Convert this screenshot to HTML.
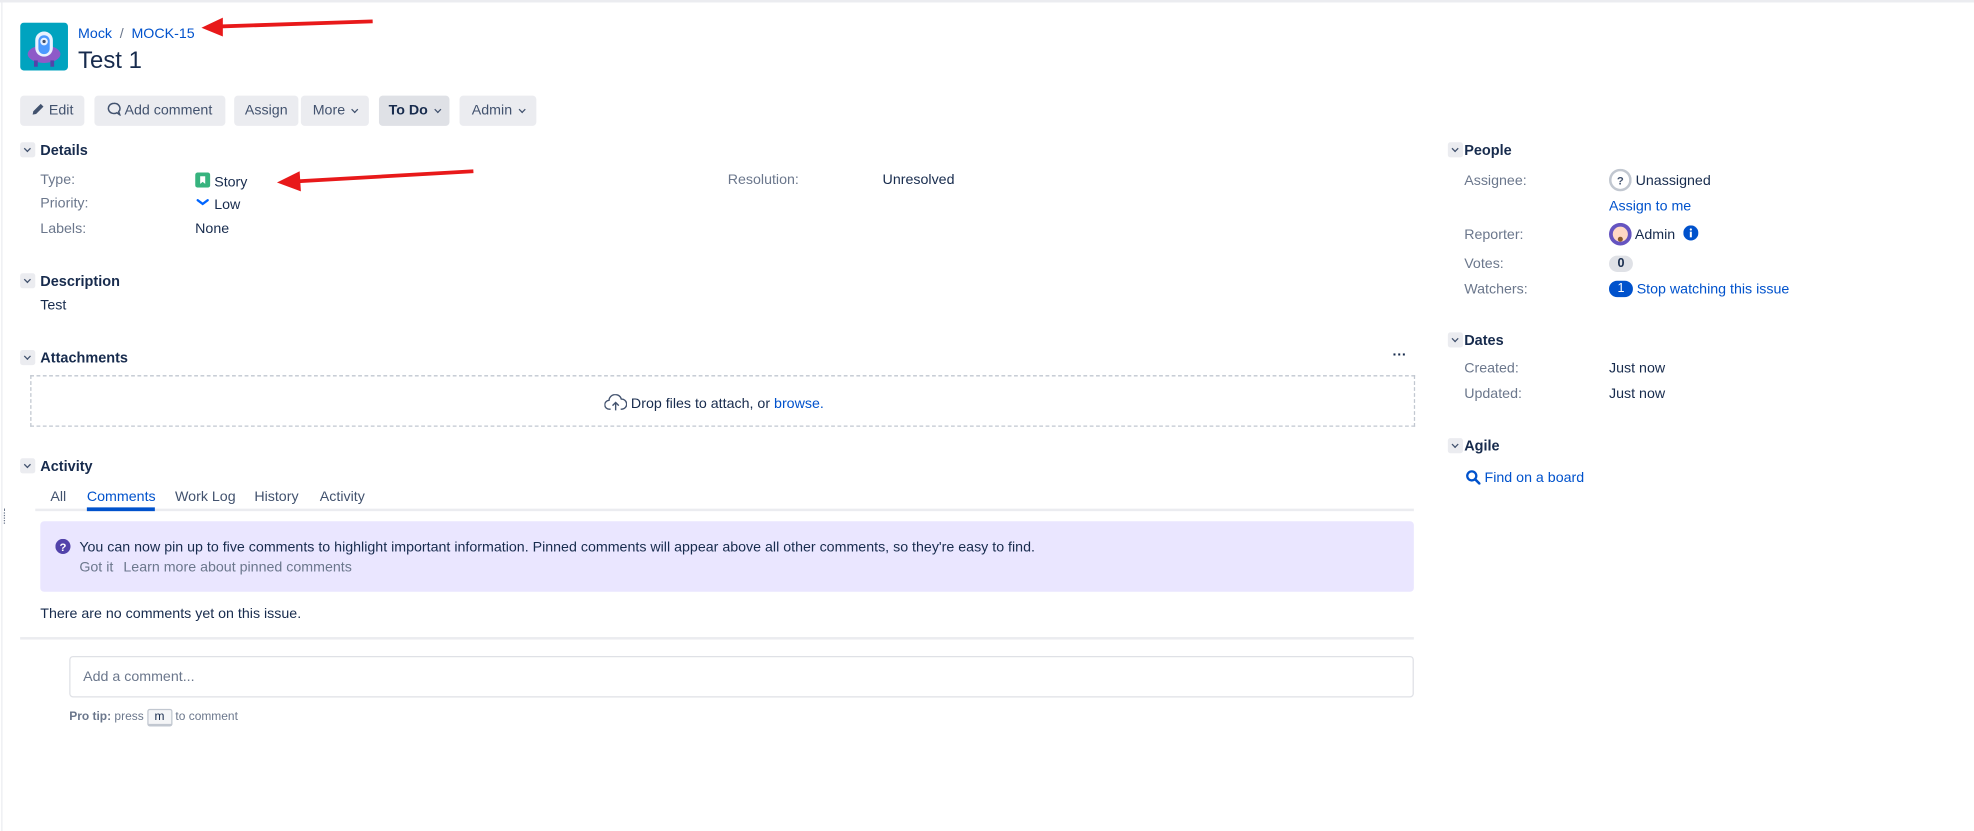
<!DOCTYPE html>
<html><head><meta charset="utf-8">
<style>
html,body{margin:0;padding:0;background:#fff;overflow:hidden;width:1974px;height:831px}
#w{position:absolute;left:0;top:0;width:1568px;height:660px;transform:scale(1.259);transform-origin:0 0;font-family:"Liberation Sans",sans-serif;font-size:11.3px;color:#172b4d}
.a{position:absolute;white-space:nowrap;margin-top:1.5px}
.lb{color:#6b778c}
.ln{color:#0052cc}
.btn{position:absolute;top:76px;height:24px;line-height:25px;background:#ebecf0;border-radius:3px;color:#42526e;font-size:11.3px;text-align:center}
.chev{position:absolute;width:12px;height:12px;background:#ebecf0;border-radius:2px}
.chev:after{content:"";position:absolute;left:4px;top:3px;width:2.5px;height:2.5px;border-right:1.6px solid #42526e;border-bottom:1.6px solid #42526e;transform:rotate(45deg)}
.h{position:absolute;font-weight:bold;font-size:11.5px;white-space:nowrap;margin-top:1.5px}
.dd{display:inline-block;width:2.5px;height:2.5px;border-right:1.6px solid #42526e;border-bottom:1.6px solid #42526e;transform:rotate(45deg);margin-left:6px;vertical-align:3px}
</style></head><body><div id="w">
<div style="position:absolute;left:0;top:0;width:1568px;height:2px;background:#ebecf0"></div>
<div style="position:absolute;left:1px;top:0;width:1px;height:660px;background:#ebecf0"></div>

<svg class="a" style="left:16px;top:18px;margin:0" width="38" height="38" viewBox="0 0 38 38"><rect width="38" height="38" rx="3" fill="#00a3bf"/><ellipse cx="19" cy="25" rx="13" ry="7" fill="#8e5ac8"/><rect x="12" y="7" width="14" height="20" rx="7" fill="#e9f2ff"/><rect x="14.5" y="10" width="9" height="15" rx="4.5" fill="#4c9aff"/><circle cx="19" cy="15" r="3" fill="#e9f2ff"/><circle cx="19" cy="15" r="1.3" fill="#42526e"/><rect x="11" y="30" width="3" height="5" fill="#5243aa"/><rect x="24" y="30" width="3" height="5" fill="#5243aa"/></svg>
<div class="a ln" style="left:62px;top:19px">Mock <span style="color:#6b778c;margin:0 3px">/</span> MOCK-15</div>
<div class="a" style="left:62px;top:36px;font-size:19px">Test 1</div>

<div class="btn" style="left:16px;width:51px"><svg width="11" height="11" viewBox="0 0 12 12" style="vertical-align:-1px"><path d="M1 11l.6-3L8 1.6l2.4 2.4L4 10.4z" fill="#42526e"/></svg> Edit</div>
<div class="btn" style="left:75px;width:104px"><svg width="11" height="11" viewBox="0 0 12 12" style="vertical-align:-1px"><path d="M6 1.2a4.8 4.4 0 1 0 2.6 8.1L11 11l-.9-2.6A4.8 4.4 0 0 0 6 1.2z" fill="none" stroke="#42526e" stroke-width="1.3"/></svg> Add comment</div>
<div class="btn" style="left:186px;width:51px">Assign</div>
<div class="btn" style="left:239px;width:54px">More<span class="dd"></span></div>
<div class="btn" style="left:301px;width:56px;background:#dfe1e6;color:#172b4d;font-weight:bold">To Do<span class="dd"></span></div>
<div class="btn" style="left:365px;width:61px">Admin<span class="dd"></span></div>

<div class="chev" style="left:16px;top:113px"></div><div class="h" style="left:32px;top:112px">Details</div>
<div class="a lb" style="left:32px;top:135px">Type:</div>
<div class="a" style="left:155px;top:135px"><svg width="12" height="12" viewBox="0 0 12 12" style="vertical-align:-1px"><rect width="12" height="12" rx="2" fill="#36b37e"/><path d="M4 3h4v6L6 7.5 4 9z" fill="#fff"/></svg> Story</div>
<div class="a lb" style="left:32px;top:154px">Priority:</div>
<div class="a" style="left:155px;top:154px"><svg width="12" height="10" viewBox="0 0 12 10"><path d="M2 3l4 3 4-3" fill="none" stroke="#0065ff" stroke-width="1.8" stroke-linecap="round"/></svg> Low</div>
<div class="a lb" style="left:32px;top:174px">Labels:</div>
<div class="a" style="left:155px;top:174px">None</div>
<div class="a lb" style="left:578px;top:135px">Resolution:</div>
<div class="a" style="left:701px;top:135px">Unresolved</div>

<div class="chev" style="left:16px;top:217px"></div><div class="h" style="left:32px;top:216px">Description</div>
<div class="a" style="left:32px;top:235px">Test</div>

<div class="chev" style="left:16px;top:278px"></div><div class="h" style="left:32px;top:277px">Attachments</div>
<div class="a" style="left:1106px;top:274px;font-weight:bold">···</div>
<div style="position:absolute;left:24px;top:298px;width:1098px;height:39px;border:1px dashed #c1c7d0"></div>
<div class="a" style="left:480px;top:311px"><svg width="18" height="14" viewBox="0 0 18 14" style="vertical-align:-3px"><path d="M5 12H4a3.5 3.5 0 0 1-.3-7A5 5 0 0 1 13.5 4 3.8 3.8 0 0 1 14 12h-1M9 13V7M6.5 9.2L9 6.7l2.5 2.5" fill="none" stroke="#42526e" stroke-width="1.1"/></svg> Drop files to attach, or <span class="ln">browse.</span></div>

<div class="chev" style="left:16px;top:364px"></div><div class="h" style="left:32px;top:363px">Activity</div>
<div class="a" style="left:40px;top:387px;color:#42526e">All</div>
<div class="a ln" style="left:69px;top:387px">Comments</div>
<div class="a" style="left:139px;top:387px;color:#42526e">Work Log</div>
<div class="a" style="left:202px;top:387px;color:#42526e">History</div>
<div class="a" style="left:254px;top:387px;color:#42526e">Activity</div>
<div style="position:absolute;left:28px;top:404px;width:1095px;height:2px;background:#ebecf0"></div>
<div style="position:absolute;left:69px;top:403px;width:54px;height:3px;background:#0052cc"></div>
<div style="position:absolute;left:3px;top:404px;width:1px;height:12px;border-left:1.5px dotted #6b778c"></div>

<div style="position:absolute;left:32px;top:414px;width:1091px;height:56px;background:#eae6ff;border-radius:3px"></div>
<svg class="a" style="left:44px;top:428px;margin:0" width="12" height="12" viewBox="0 0 12 12"><circle cx="6" cy="6" r="6" fill="#5243aa"/><text x="6" y="9.5" font-size="9" font-weight="bold" fill="#fff" text-anchor="middle" font-family="Liberation Sans">?</text></svg>
<div class="a" style="left:63px;top:427px">You can now pin up to five comments to highlight important information. Pinned comments will appear above all other comments, so they're easy to find.</div>
<div class="a lb" style="left:63px;top:443px">Got it</div>
<div class="a lb" style="left:98px;top:443px">Learn more about pinned comments</div>
<div class="a" style="left:32px;top:480px">There are no comments yet on this issue.</div>
<div style="position:absolute;left:16px;top:506px;width:1107px;height:2px;background:#ebecf0"></div>
<div style="position:absolute;left:55px;top:521px;width:1066px;height:31px;border:1px solid #dfe1e6;border-radius:3px"></div>
<div class="a lb" style="left:66px;top:530px">Add a comment...</div>
<div class="a lb" style="left:55px;top:561px;font-size:9.5px"><b>Pro tip:</b> press <span style="display:inline-block;border:1px solid #c1c7d0;border-bottom-width:2px;border-radius:2px;padding:0 5px;color:#172b4d;background:#f4f5f7">m</span> to comment</div>

<div class="chev" style="left:1150px;top:113px"></div><div class="h" style="left:1163px;top:112px">People</div>
<div class="a lb" style="left:1163px;top:136px">Assignee:</div>
<div class="a" style="left:1278px;top:134px;margin:0"><svg width="18" height="18" viewBox="0 0 18 18" style="vertical-align:-5px"><circle cx="9" cy="9" r="8" fill="#fff" stroke="#c1c7d0" stroke-width="2"/><text x="9" y="12.5" font-size="9" font-weight="bold" fill="#42526e" text-anchor="middle" font-family="Liberation Sans">?</text></svg> Unassigned</div>
<div class="a ln" style="left:1278px;top:156px">Assign to me</div>
<div class="a lb" style="left:1163px;top:179px">Reporter:</div>
<div class="a" style="left:1278px;top:177px;margin:0"><svg width="18" height="18" viewBox="0 0 18 18" style="vertical-align:-5px"><circle cx="9" cy="9" r="9" fill="#6554c0"/><circle cx="9" cy="9" r="6" fill="#ffd8c4"/><circle cx="9" cy="13" r="2" fill="#8b5a2b"/></svg> Admin <svg width="12" height="12" viewBox="0 0 12 12" style="vertical-align:-1px;margin-left:3px"><circle cx="6" cy="6" r="6" fill="#0052cc"/><rect x="5.2" y="5" width="1.6" height="4.5" fill="#fff"/><circle cx="6" cy="3.3" r="0.9" fill="#fff"/></svg></div>
<div class="a lb" style="left:1163px;top:202px">Votes:</div>
<div class="a" style="left:1278px;top:203px;margin:0;background:#dfe1e6;border-radius:8px;width:19px;height:13px;line-height:13px;text-align:center;font-size:10px;font-weight:bold">0</div>
<div class="a lb" style="left:1163px;top:222px">Watchers:</div>
<div class="a" style="left:1278px;top:223px;margin:0;background:#0052cc;color:#fff;border-radius:8px;width:19px;height:13px;line-height:13px;text-align:center;font-size:10px">1</div>
<div class="a ln" style="left:1300px;top:222px">Stop watching this issue</div>

<div class="chev" style="left:1150px;top:264px"></div><div class="h" style="left:1163px;top:263px">Dates</div>
<div class="a lb" style="left:1163px;top:285px">Created:</div><div class="a" style="left:1278px;top:285px">Just now</div>
<div class="a lb" style="left:1163px;top:305px">Updated:</div><div class="a" style="left:1278px;top:305px">Just now</div>

<div class="chev" style="left:1150px;top:348px"></div><div class="h" style="left:1163px;top:347px">Agile</div>
<div class="a ln" style="left:1164px;top:371px"><svg width="12" height="12" viewBox="0 0 12 12" style="vertical-align:-2px"><circle cx="5" cy="5" r="3.6" fill="none" stroke="#0052cc" stroke-width="1.8"/><path d="M7.6 7.6L11 11" stroke="#0052cc" stroke-width="2" stroke-linecap="round"/></svg> Find on a board</div>

<svg style="position:absolute;left:0;top:0" width="400" height="160"><path d="M296 17L175 21" stroke="#e8191a" stroke-width="3"/><path d="M160 22L177 14 177 29z" fill="#e8191a"/><path d="M376 136L237 144" stroke="#e8191a" stroke-width="3"/><path d="M220 145L238 136 239 152z" fill="#e8191a"/></svg>
</div></body></html>
